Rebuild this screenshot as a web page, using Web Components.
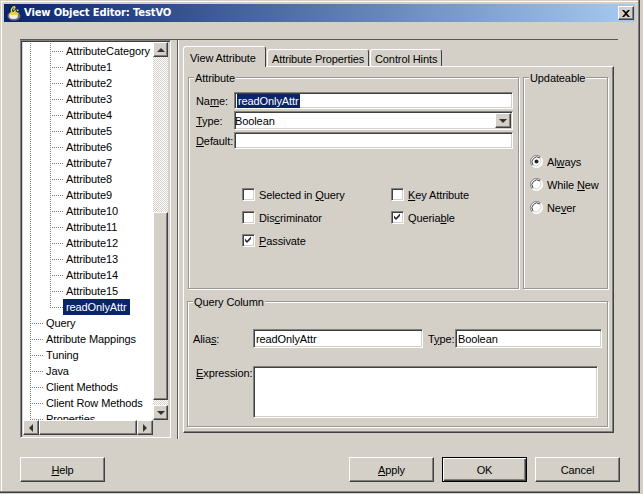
<!DOCTYPE html>
<html><head><meta charset="utf-8"><title>View Object Editor</title>
<style>
html,body{margin:0;padding:0;background:#d4d0c8;overflow:hidden}
body{font:11px/14px "Liberation Sans",Arial,sans-serif;letter-spacing:-.1px;color:#000}
</style></head><body>
<dlg-window>
  <title-bar slot="title">View Object Editor: TestVO</title-bar>
  <split-pane>
    <tree-box>
      <tree-row level="1">AttributeCategory</tree-row>
      <tree-row level="1">Attribute1</tree-row>
      <tree-row level="1">Attribute2</tree-row>
      <tree-row level="1">Attribute3</tree-row>
      <tree-row level="1">Attribute4</tree-row>
      <tree-row level="1">Attribute5</tree-row>
      <tree-row level="1">Attribute6</tree-row>
      <tree-row level="1">Attribute7</tree-row>
      <tree-row level="1">Attribute8</tree-row>
      <tree-row level="1">Attribute9</tree-row>
      <tree-row level="1">Attribute10</tree-row>
      <tree-row level="1">Attribute11</tree-row>
      <tree-row level="1">Attribute12</tree-row>
      <tree-row level="1">Attribute13</tree-row>
      <tree-row level="1">Attribute14</tree-row>
      <tree-row level="1">Attribute15</tree-row>
      <tree-row level="1" last selected>readOnlyAttr</tree-row>
      <tree-row level="0">Query</tree-row>
      <tree-row level="0">Attribute Mappings</tree-row>
      <tree-row level="0">Tuning</tree-row>
      <tree-row level="0">Java</tree-row>
      <tree-row level="0">Client Methods</tree-row>
      <tree-row level="0">Client Row Methods</tree-row>
      <tree-row level="0">Properties</tree-row>
    </tree-box>
    <right-pane>
      <tab-strip>
        <tab-item active style="width:83px">View Attribute</tab-item>
        <tab-item style="width:102px">Attribute Properties</tab-item>
        <tab-item style="width:72px">Control Hints</tab-item>
      </tab-strip>
      <tab-panel>
        <group-box label="Attribute" style="margin-left:1px">
          <attr-form>
            <span>Na<u>m</u>e:</span><text-field style="height:17px"><sel-text>readOnlyAttr</sel-text></text-field>
            <span><u>T</u>ype:</span><combo-field style="height:19px">Boolean</combo-field>
            <span><u>D</u>efault:</span><text-field style="height:17px"></text-field>
          </attr-form>
          <check-grid>
            <check-box>Selected in <u>Q</u>uery</check-box>
            <check-box><u>K</u>ey Attribute</check-box>
            <check-box>Dis<u>c</u>riminator</check-box>
            <check-box checked>Queria<u>b</u>le</check-box>
            <check-box checked><u>P</u>assivate</check-box>
          </check-grid>
        </group-box>
        <group-box label="Updateable">
          <radio-col>
            <radio-box checked>Al<u>w</u>ays</radio-box>
            <radio-box>While <u>N</u>ew</radio-box>
            <radio-box>Ne<u>v</u>er</radio-box>
          </radio-col>
        </group-box>
        <group-box label="Query Column" style="grid-column:1/3">
          <query-form>
            <span slot="alias" style="width:60px">Alia<u>s</u>:</span>
            <text-field slot="alias" style="width:170px;height:19px">readOnlyAttr</text-field>
            <span slot="alias" style="width:27px;margin-left:5px">T<u>y</u>pe:</span>
            <text-field slot="alias" style="width:147px;height:19px">Boolean</text-field>
            <span slot="expr" style="width:57px;padding-left:3px"><u>E</u>xpression:</span>
            <text-field slot="expr" style="width:345px;height:52px"></text-field>
          </query-form>
        </group-box>
      </tab-panel>
    </right-pane>
  </split-pane>
  <btn-row>
    <push-btn><span><u>H</u>elp</span></push-btn>
    <push-btn><span><u>A</u>pply</span></push-btn>
    <push-btn default>OK</push-btn>
    <push-btn>Cancel</push-btn>
  </btn-row>
</dlg-window>
<script>
function def(name,css,html){
  customElements.define(name,class extends HTMLElement{
    constructor(){super();const r=this.attachShadow({mode:'open'});
      r.innerHTML='<style>'+css+'</style>'+(typeof html==='function'?html(this):html);}
  });
}
const sunken=`border:1px solid;border-color:#808080 #fff #fff #808080;box-shadow:inset 1px 1px 0 #404040,inset -1px -1px 0 #d4d0c8;background:#fff;box-sizing:border-box;`;
const raised=`box-sizing:border-box;background:#d4d0c8;border:1px solid;border-color:#fff #404040 #404040 #fff;box-shadow:inset -1px -1px 0 #808080;`;

def('dlg-window',`:host{display:flex;flex-direction:column;box-sizing:border-box;width:640px;height:493px;padding:4px 4px 0 4px;
  box-shadow:inset -1px -1px 0 #404040,inset -2px -2px 0 #808080,inset 1px 1px 0 #d4d0c8,inset 2px 2px 0 #fff}
  .body{display:flex;flex-direction:column;padding:17px 0 0 16px}`,
  `<slot name="title"></slot><div class="body"><slot></slot></div>`);

def('title-bar',`:host{display:flex;align-items:center;height:18px;width:631px;box-sizing:border-box;padding:0 1px 0 2px;background:linear-gradient(90deg,#0a246a,#a6caf0);color:#fff}
  svg{width:16px;height:16px;flex:none;margin-right:2px}
  b{flex:1;font:bold 10px/14px "DejaVu Sans",sans-serif;letter-spacing:-.15px}
  .x{${raised}width:16px;height:14px;display:flex;align-items:center;justify-content:center}
  .x svg{width:8px;height:7px;margin:0}`,
  `<svg viewBox="0 0 16 16"><ellipse cx="8" cy="11" rx="6.500" ry="4.600" fill="#77736c"/><ellipse cx="7.500" cy="11" rx="4.400" ry="3" fill="#eeeeea"/><ellipse cx="8" cy="8.600" rx="4.600" ry="1.700" fill="#e8d83c"/><path d="M6 7.500C4.500 5 6 2 8.500 1.500M8.500 1.500c1 1.800 0 2.600-1.200 3.400M8 7.500c1-2 3-2.500 4.500-2" fill="none" stroke="#e6dc40" stroke-width="1.400"/><path d="M9 3.500l2 3" stroke="#2f2f20" stroke-width="1"/></svg><b><slot></slot></b><div class="x"><svg viewBox="0 0 8 7"><path d="M0 0l2 0 2 2 2-2 2 0-3 3.500 3 3.500-2 0-2-2-2 2-2 0 3-3.500z" fill="#000"/></svg></div>`);

def('split-pane',`:host{display:grid;grid-template-columns:151px 1fr;column-gap:6px;width:598px;height:400px;border-top:1px solid #5a5852;box-sizing:border-box}`,`<slot></slot>`);

def('tree-box',`:host{display:grid;grid-template-columns:130px 15px;grid-template-rows:378px 15px;box-sizing:border-box;height:398px;padding:1px 1px 1px 2px;
   border:1px solid;border-color:#808080 #fff #fff #808080;box-shadow:inset 1px 1px 0 #404040;}
  .tree{background:#fff;overflow:hidden;padding-top:1px;box-sizing:border-box}
  .c{background:#d4d0c8}`,
  `<div class="tree"><slot></slot></div><scroll-bar dir="v"></scroll-bar><scroll-bar dir="h"></scroll-bar><div class="c"></div>`);

const dots=`repeating-linear-gradient(90deg,#808080 0 1px,transparent 1px 2px)`;
const dotV=(x,h)=>`repeating-linear-gradient(180deg,#808080 0 1px,transparent 1px 2px) ${x}px 0/1px ${h||'100%'} no-repeat`;
def('tree-row',`:host{display:block;height:16px;box-sizing:border-box;white-space:nowrap;color:#000}
  :host([level="1"]){padding-left:40px;background:${dots} 27px 8px/13px 1px no-repeat,${dotV(7)},${dotV(27)}}
  :host([level="0"]){padding-left:20px;background:${dots} 7px 8px/13px 1px no-repeat,${dotV(7)}}
  :host([last]){background:${dots} 27px 8px/13px 1px no-repeat,${dotV(7)},${dotV(27,'8px')}}
  span{display:inline-block;height:16px;line-height:16px;padding:0 3px}
  :host([selected]) span{background:#0a246a;color:#fff;}`,`<span><slot></slot></span>`);

const arrows={up:'M4 1l4 4H0z',down:'M0 1h8L4 5z',left:'M5 0v8L1 4z',right:'M1 0l4 4-4 4z'};
def('arrow-btn',`:host{display:flex;align-items:center;justify-content:center;${raised}width:15px;height:15px}
  svg{display:block}`,
  h=>{const d=h.getAttribute('dir'),v=d==='up'||d==='down';
    return `<svg viewBox="0 0 ${v?'8 6':'6 8'}" width="${v?8:6}" height="${v?6:8}"><path d="${arrows[d]}" fill="#333"/></svg>`;});

const track=`background:repeating-conic-gradient(#d4d0c8 0 25%,#fff 0 50%) 0 0/2px 2px;`;
def('scroll-bar',`:host{display:grid;${track}}
  :host([dir="v"]){grid-template-rows:15px 155px 188px 5px 15px;width:15px;height:378px}
  :host([dir="h"]){grid-template-columns:16px 98px 16px;height:15px;width:130px}
  .t{${raised}} i{display:block}
  arrow-btn{width:100%;height:100%}`,
  h=>h.getAttribute('dir')==='v'
   ?`<arrow-btn dir="up"></arrow-btn><i></i><div class="t"></div><i></i><arrow-btn dir="down"></arrow-btn>`
   :`<arrow-btn dir="left"></arrow-btn><div class="t"></div><arrow-btn dir="right"></arrow-btn>`);

def('right-pane',`:host{display:block;box-sizing:border-box;height:399px;border-left:1px solid #5a5852;box-shadow:inset 1px 0 0 #fff;padding:6px 0 0 5px}`,`<slot></slot>`);

def('tab-strip',`:host{display:flex;align-items:flex-end;height:20px;position:relative;z-index:1}`,`<slot></slot>`);
def('tab-item',`:host{display:block;box-sizing:border-box;height:17px;padding:2px 0 0 4px;margin-right:1px;white-space:nowrap;
    background:#d4d0c8;border:solid;border-width:1px 1px 0 1px;border-color:#fff #404040 #fff #fff;border-radius:3px 3px 0 0;line-height:14px}
  :host([active]){height:21px;padding:4px 0 0 6px;margin-bottom:-1px}`,`<slot></slot>`);
def('tab-panel',`:host{display:grid;grid-template-columns:332px 85px;column-gap:4px;grid-template-rows:212px 126px;row-gap:12px;box-sizing:border-box;width:431px;height:367px;padding:10px 0 0 3px;
   border:1px solid;border-color:#fff #404040 #404040 #fff;box-shadow:inset -1px -1px 0 #808080}`,`<slot></slot>`);

def('group-box',`:host{display:block;box-sizing:border-box;border:1px solid #9a978f;box-shadow:inset 1px 1px 0 #fff,1px 1px 0 #fff}
  .h{display:block;width:fit-content;background:#d4d0c8;margin:-7px 0 0 5px;padding:0 1px;height:14px}`,
  h=>`<div class="h">${h.getAttribute('label')}</div><slot></slot>`);

def('text-field',`:host{display:flex;align-items:center;${sunken}white-space:nowrap;padding:0 2px;overflow:hidden}`,`<slot></slot>`);
def('combo-field',`:host{display:flex;align-items:center;${sunken}white-space:nowrap;padding:0 1px 0 0;justify-content:space-between}
  arrow-btn{width:16px;height:15px}`,`<slot></slot><arrow-btn dir="down"></arrow-btn>`);
def('sel-text',`:host{display:inline-block;background:#0a246a;color:#fff;height:14px;line-height:14px;padding:0 1px}`,`<slot></slot>`);

def('attr-form',`:host{display:grid;grid-template-columns:38px 279px;grid-template-rows:17px 19px 17px;row-gap:2px;padding:7px 0 0 7px;align-items:center}`,`<slot></slot>`);
def('check-grid',`:host{display:grid;grid-template-columns:149px 149px;grid-auto-rows:23px;padding:34px 0 0 53px}`,`<slot></slot>`);
def('check-box',`:host{display:flex;align-items:center;gap:4px;white-space:nowrap}
  .b{${sunken}width:13px;height:13px;display:block;flex:none}
  svg{display:block;width:11px;height:11px}`,
  h=>`<span class="b">${h.hasAttribute('checked')?'<svg viewBox="0 0 11 11"><path d="M2 3.500l2 2.200 4-4.200v2.400l-4 4.200-2-2.200z" fill="#2a2a2a"/></svg>':''}</span><span><slot></slot></span>`);
def('radio-box',`:host{display:flex;align-items:center;gap:4px;white-space:nowrap;height:23px}
  svg{width:13px;height:13px;flex:none}`,
  h=>`<svg viewBox="0 0 13 13"><circle cx="6.500" cy="6.500" r="6" fill="#fff"/><path d="M2.200 10.800A6 6 0 0 1 10.800 2.200" fill="none" stroke="#808080"/><path d="M3 10A5 5 0 0 1 10 3" fill="none" stroke="#404040"/><path d="M10.800 2.200A6 6 0 0 1 2.200 10.800" fill="none" stroke="#fff"/><path d="M10 3A5 5 0 0 1 3 10" fill="none" stroke="#d4d0c8"/>${h.hasAttribute('checked')?'<circle cx="6.500" cy="6.500" r="2" fill="#222"/>':''}</svg><span><slot></slot></span>`);
def('radio-col',`:host{display:flex;flex-direction:column;padding:65px 0 0 6px}`,`<slot></slot>`);

def('query-form',`:host{display:block;padding:20px 0 0 5px}
  .r1{display:flex;align-items:center;height:19px}
  .r2{display:flex;margin-top:18px}`,
  `<div class="r1"><slot name="alias"></slot></div><div class="r2"><slot name="expr"></slot></div>`);

def('btn-row',`:host{display:flex;width:600px;margin-top:18px;gap:8px}
  ::slotted(:first-child){margin-right:236px}`,`<slot></slot>`);
def('push-btn',`:host{display:flex;align-items:center;justify-content:center;${raised}width:85px;height:25px}
  :host([default]){border-color:#000;box-shadow:inset 1px 1px 0 #fff,inset -1px -1px 0 #404040,inset -2px -2px 0 #808080}`,`<span><slot></slot></span>`);
</script>
</body></html>
